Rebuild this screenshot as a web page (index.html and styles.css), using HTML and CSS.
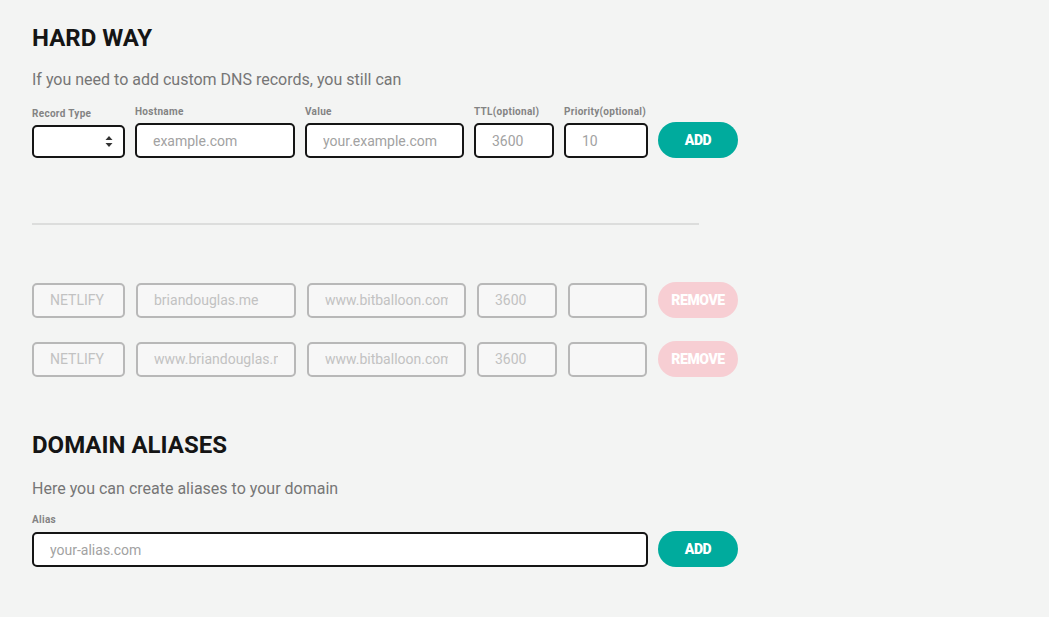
FILE: index.html
```html
<!DOCTYPE html>
<html lang="en">

<head>
    <meta charset="UTF-8">
    <meta name="viewport" content="width=device-width, initial-scale=1.0">
    <title>DNS settings</title>
    <link rel="stylesheet" href="styles.css">
</head>

<body>
    <div class="page">
        <!-- custom records -->
        <section class="section">
            <h1 class="section-title">HARD WAY</h1>
            <p class="section-text">If you need to add custom DNS records, you still can</p>

            <div class="field-row">
                <div class="field field-type">
                    <label class="field-label">Record Type</label>
                    <div class="select-wrap">
                        <select class="select"></select>
                        <svg class="select-arrows" width="8" height="11" viewBox="0 0 8 11">
                            <path d="M4 0 L7.5 4 L0.5 4 Z" fill="#333" />
                            <path d="M4 11 L7.5 7 L0.5 7 Z" fill="#333" />
                        </svg>
                    </div>
                </div>
                <div class="field field-host">
                    <label class="field-label">Hostname</label>
                    <input class="input" type="text" placeholder="example.com">
                </div>
                <div class="field field-value">
                    <label class="field-label">Value</label>
                    <input class="input" type="text" placeholder="your.example.com">
                </div>
                <div class="field field-ttl">
                    <label class="field-label">TTL(optional)</label>
                    <input class="input" type="text" placeholder="3600">
                </div>
                <div class="field field-priority">
                    <label class="field-label">Priority(optional)</label>
                    <input class="input" type="text" placeholder="10">
                </div>
                <button class="btn btn-add">ADD</button>
            </div>

            <hr class="divider">

            <div class="records">
                <div class="record-row">
                    <input class="input input-off rec-type" type="text" value="NETLIFY" disabled>
                    <input class="input input-off rec-host" type="text" value="briandouglas.me" disabled>
                    <input class="input input-off rec-value" type="text" value="www.bitballoon.com" disabled>
                    <input class="input input-off rec-ttl" type="text" value="3600" disabled>
                    <input class="input input-off rec-priority" type="text" value="" disabled>
                    <button class="btn btn-remove">REMOVE</button>
                </div>
                <div class="record-row">
                    <input class="input input-off rec-type" type="text" value="NETLIFY" disabled>
                    <input class="input input-off rec-host" type="text" value="www.briandouglas.me" disabled>
                    <input class="input input-off rec-value" type="text" value="www.bitballoon.com" disabled>
                    <input class="input input-off rec-ttl" type="text" value="3600" disabled>
                    <input class="input input-off rec-priority" type="text" value="" disabled>
                    <button class="btn btn-remove">REMOVE</button>
                </div>
            </div>
        </section>

        <!-- aliases -->
        <section class="section section-aliases">
            <h1 class="section-title">DOMAIN ALIASES</h1>
            <p class="section-text">Here you can create aliases to your domain</p>

            <div class="field-row">
                <div class="field field-alias">
                    <label class="field-label">Alias</label>
                    <input class="input" type="text" placeholder="your-alias.com">
                </div>
                <button class="btn btn-add">ADD</button>
            </div>
        </section>
    </div>
</body>

</html>
```

FILE: styles.css
```css
* {
    box-sizing: border-box;
}

body {
    margin: 0;
    font-family: Roboto, 'Liberation Sans', sans-serif;
    background: #f3f4f3;
    color: #1a1a1a;
}

.page {
    padding: 24px 32px 0;
}

.section-title {
    margin: 0 0 18px;
    font-size: 24px;
    line-height: 28px;
    font-weight: 700;
    color: #151515;
}

.section-text {
    margin: 0 0 16px;
    font-size: 16px;
    line-height: 20px;
    color: #767676;
}

.section-aliases {
    margin-top: 54px;
}

.section-aliases .section-title {
    margin-bottom: 20px;
}

.section-aliases .section-text {
    margin-bottom: 15px;
}

.section-aliases .field-label {
    margin-bottom: 6px;
}

.field-row {
    display: flex;
    align-items: flex-end;
    gap: 10px;
}

.field {
    display: flex;
    flex-direction: column;
}

.field-label {
    margin-bottom: 5px;
    font-size: 10px;
    line-height: 12px;
    font-weight: 700;
    letter-spacing: 0.3px;
    color: #838383;
}

.field-type { width: 93px; }
.field-host { width: 160px; }
.field-value { width: 159px; }
.field-ttl { width: 80px; }
.field-priority { width: 84px; }
.field-alias { width: 616px; }

.input {
    width: 100%;
    height: 35px;
    padding: 0 16px;
    border: 2px solid #151515;
    border-radius: 5px;
    background: #fff;
    font-family: inherit;
    font-size: 14px;
    color: #222;
    outline: none;
}

.input::placeholder {
    color: #a2a2a2;
}

.select-wrap {
    position: relative;
}

.select {
    display: block;
    width: 100%;
    height: 33px;
    border: 2px solid #151515;
    border-radius: 5px;
    background: #fff;
    appearance: none;
    -webkit-appearance: none;
    outline: none;
}

.select-arrows {
    position: absolute;
    right: 12px;
    top: 11px;
}

.btn {
    width: 80px;
    height: 36px;
    border: none;
    border-radius: 18px;
    font-family: inherit;
    font-size: 14px;
    font-weight: 900;
    letter-spacing: -0.4px;
    color: #fff;
    cursor: pointer;
}

.btn-add {
    background: #00ab9d;
}

.btn-remove {
    background: #f7ced3;
}

.divider {
    width: 667px;
    height: 2px;
    margin: 65px 0 57px;
    border: none;
    background: #dcdddc;
}

.records {
    display: flex;
    flex-direction: column;
    gap: 23px;
}

.record-row {
    display: flex;
    align-items: center;
    gap: 11px;
}

.input-off {
    border-color: #b8b8b8;
    background: #f7f7f7;
    color: #c2c2c2;
}

.rec-type { width: 93px; }
.rec-host { width: 160px; }
.rec-value { width: 159px; }
.rec-ttl { width: 80px; }
.rec-priority { width: 79px; }
```
